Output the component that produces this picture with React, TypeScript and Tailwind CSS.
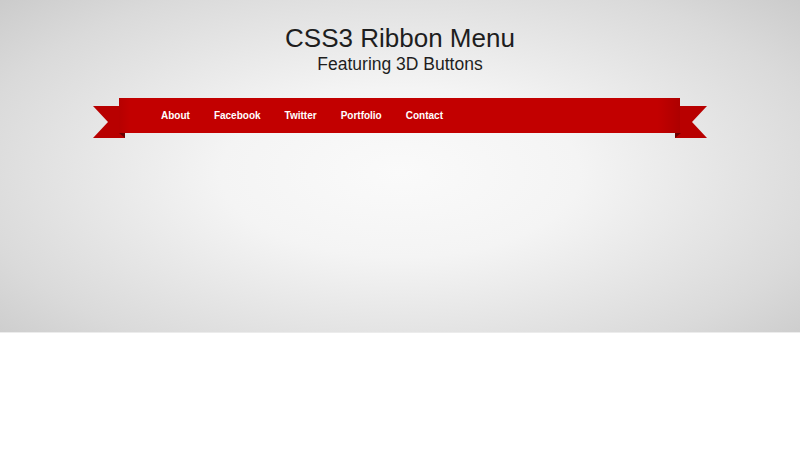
const MENU = ['About', 'Facebook', 'Twitter', 'Portfolio', 'Contact'];

function LeftTail() {
  return (
    <svg width="33" height="40" viewBox="0 0 33 40" className="shrink-0">
      <polygon points="1,8 33,8 33,40 1,40 16,24" fill="#b80000" />
      <polygon points="27,35 33,35 33,40" fill="#6a0000" />
    </svg>
  );
}

function RightTail() {
  return (
    <svg width="33" height="40" viewBox="0 0 33 40" className="shrink-0">
      <polygon points="0,8 32,8 17,24 32,40 0,40" fill="#b80000" />
      <polygon points="0,35 6,35 0,40" fill="#6a0000" />
    </svg>
  );
}

export default function App() {
  return (
    <div className="min-h-[450px] bg-white font-['Liberation_Sans',Arial,sans-serif]">
      <section className="h-[333px] border-b border-[#ececec] bg-[radial-gradient(ellipse_75%_85%_at_50%_52%,#fafafa_0%,#f4f4f4_30%,#dadada_72%,#c4c4c4_100%)] pt-[23px]">
        <h1 className="text-center text-[26px] leading-[30px] text-[#1e1e1e]">CSS3 Ribbon Menu</h1>
        <h2 className="text-center text-[17.5px] leading-[22px] text-[#1e1e1e]">Featuring 3D Buttons</h2>

        <nav className="mt-[23px] flex justify-center">
          <LeftTail />
          <ul className="relative z-10 -ml-[6px] flex h-[35px] w-[561px] items-center bg-[linear-gradient(to_right,#b60000,#c20000_2%,#c20000_96%,#ad0000)] pl-[30px]">
            {MENU.map((item) => (
              <li key={item} className="px-[12px] text-[10px] font-bold text-white">
                {item}
              </li>
            ))}
          </ul>
          <div className="-ml-[5px]">
            <RightTail />
          </div>
        </nav>
      </section>
    </div>
  );
}
